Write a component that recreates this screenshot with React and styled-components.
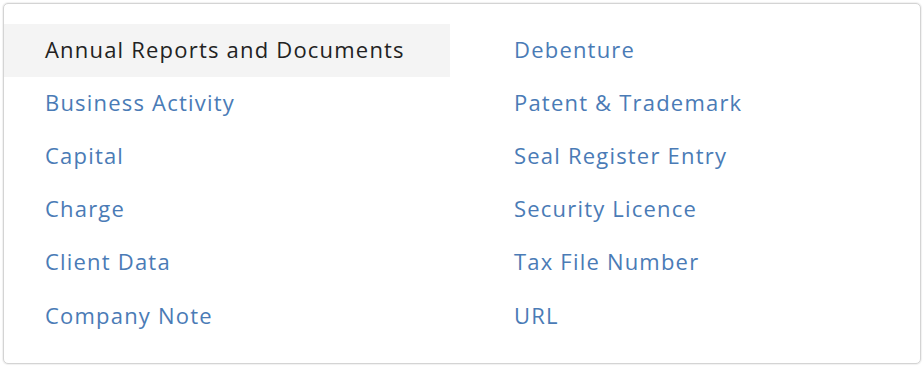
import React from "react";
import styled, { createGlobalStyle } from "styled-components";

const Global = createGlobalStyle`
  html, body { margin: 0; padding: 0; background: #fff; }
  body { font-family: "Open Sans", "Noto Sans", sans-serif; }
`;

const Page = styled.div`
  padding: 3px 3px 2px 3px;
  width: 924px;
  height: 366px;
  box-sizing: border-box;
`;

const Panel = styled.div`
  box-sizing: border-box;
  height: 100%;
  border: 1px solid #d4d4d4;
  border-radius: 5px;
  box-shadow: 0 0 1px 1px rgba(0, 0, 0, 0.06);
  background: #fff;
  padding: 20px 2px 0 0;
  display: grid;
  grid-template-columns: 446px 446px;
  column-gap: 23px;
  align-content: start;
`;

const Column = styled.ul`
  list-style: none;
  margin: 0;
  padding: 0;
  display: flex;
  flex-direction: column;
`;

const Item = styled.li`
  height: 53.2px;
  display: flex;
  align-items: center;
  padding-left: 41px;
  padding-bottom: 4px;
  box-sizing: border-box;
  font-size: 22px;
  letter-spacing: 1.2px;
  white-space: nowrap;
  color: ${(p) => (p.$active ? "#222" : "#4a7bb6")};
  background: ${(p) => (p.$active ? "#f4f4f4" : "transparent")};
`;

const left = ["Annual Reports and Documents", "Business Activity", "Capital", "Charge", "Client Data", "Company Note"];
const right = ["Debenture", "Patent & Trademark", "Seal Register Entry", "Security Licence", "Tax File Number", "URL"];

export default function App() {
  return (
    <>
      <Global />
      <Page>
        <Panel>
          <Column>
            {left.map((t, i) => (
              <Item key={t} $active={i === 0}>{t}</Item>
            ))}
          </Column>
          <Column>
            {right.map((t) => (
              <Item key={t}>{t}</Item>
            ))}
          </Column>
        </Panel>
      </Page>
    </>
  );
}
